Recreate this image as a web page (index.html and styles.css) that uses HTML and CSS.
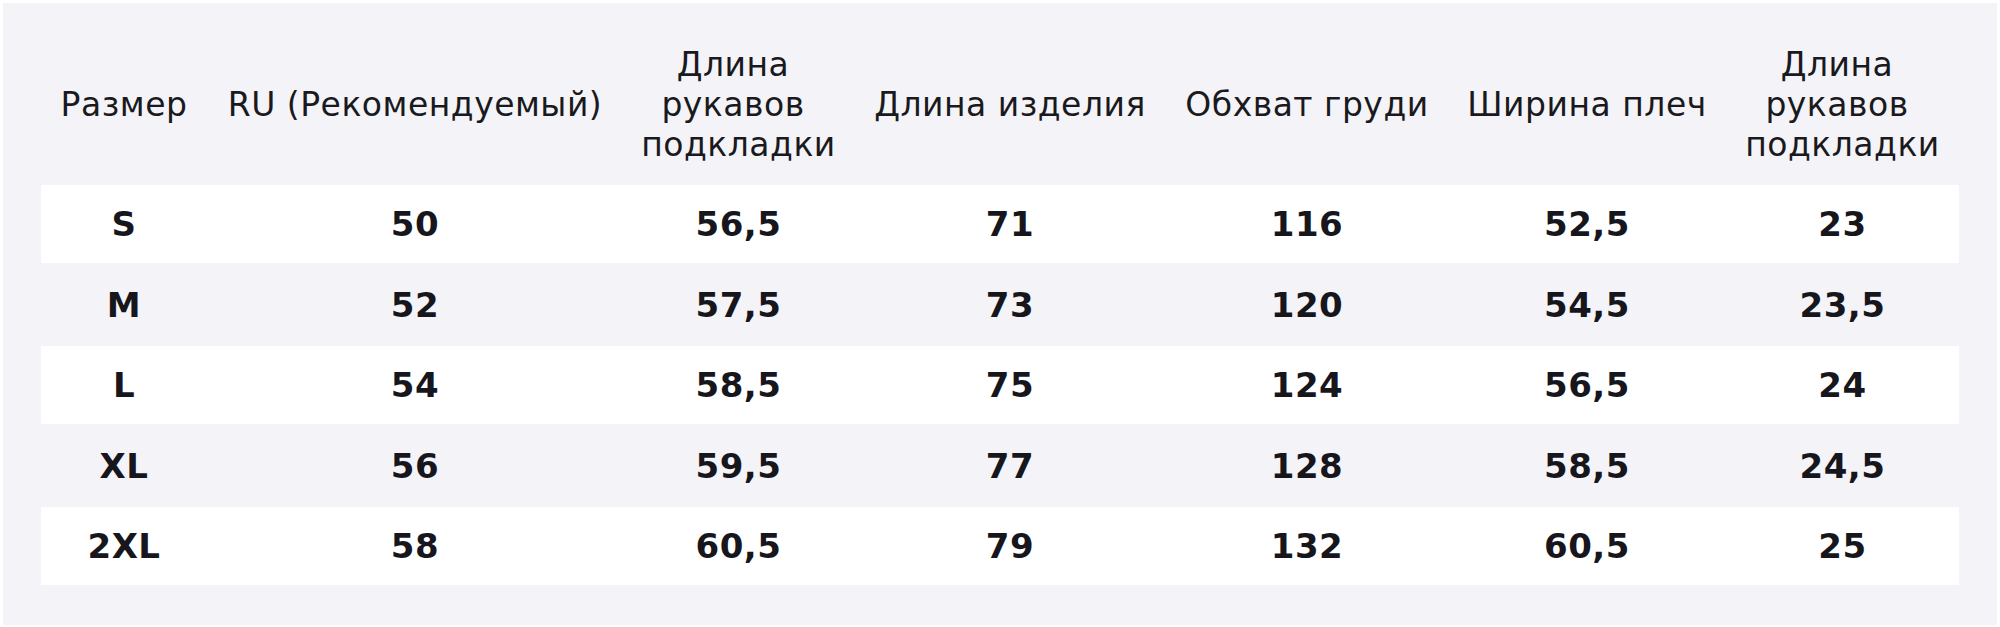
FILE: index.html
```html
<!DOCTYPE html>
<html lang="ru">
<head>
<meta charset="utf-8">
<title>Таблица размеров</title>
<link rel="stylesheet" href="styles.css">
</head>
<body>
<div class="panel">
  <table class="sizes">
    <thead>
      <tr>
        <th class="c1">Размер</th>
        <th class="c2">RU (Рекомендуемый)</th>
        <th class="c3 multi">Длина рукавов подкладки</th>
        <th class="c4">Длина изделия</th>
        <th class="c5">Обхват груди</th>
        <th class="c6">Ширина плеч</th>
        <th class="c7 multi">Длина рукавов подкладки</th>
      </tr>
    </thead>
    <tbody>
      <tr class="odd"><td>S</td><td>50</td><td>56,5</td><td>71</td><td>116</td><td>52,5</td><td>23</td></tr>
      <tr class="even"><td>M</td><td>52</td><td>57,5</td><td>73</td><td>120</td><td>54,5</td><td>23,5</td></tr>
      <tr class="odd"><td>L</td><td>54</td><td>58,5</td><td>75</td><td>124</td><td>56,5</td><td>24</td></tr>
      <tr class="even"><td>XL</td><td>56</td><td>59,5</td><td>77</td><td>128</td><td>58,5</td><td>24,5</td></tr>
      <tr class="odd"><td>2XL</td><td>58</td><td>60,5</td><td>79</td><td>132</td><td>60,5</td><td>25</td></tr>
    </tbody>
  </table>
</div>
</body>
</html>
```

FILE: styles.css
```css
html, body {
  margin: 0;
  padding: 0;
  background: #ffffff;
}

body {
  padding: 3px;
  font-family: "DejaVu Sans", "Liberation Sans", sans-serif;
  color: #16161c;
}

.panel {
  background: #f4f4f8;
  padding: 0 38px 40px 38px;
}

.sizes {
  width: 100%;
  border-collapse: collapse;
  table-layout: fixed;
}

.sizes th {
  font-weight: 400;
  font-size: 33px;
  line-height: 40px;
  letter-spacing: 0.5px;
  text-align: center;
  vertical-align: middle;
  height: 182px;
  padding: 22px 4px 0 4px;
  box-sizing: border-box;
  color: #1a1a1e;
}

.sizes th.multi {
  white-space: break-spaces;
}

.c1 { width: 166px; }
.c2 { width: 416px; }
.c3 { width: 231px; }
.c4 { width: 312px; }
.c5 { width: 282px; }
.c6 { width: 278px; }
.c7 { width: 233px; }

.sizes td {
  font-weight: 700;
  font-size: 34px;
  letter-spacing: 0.5px;
  text-align: center;
  vertical-align: middle;
  padding: 0;
}

.odd td {
  background: #ffffff;
  height: 78px;
}

.even td {
  height: 83px;
}
```
